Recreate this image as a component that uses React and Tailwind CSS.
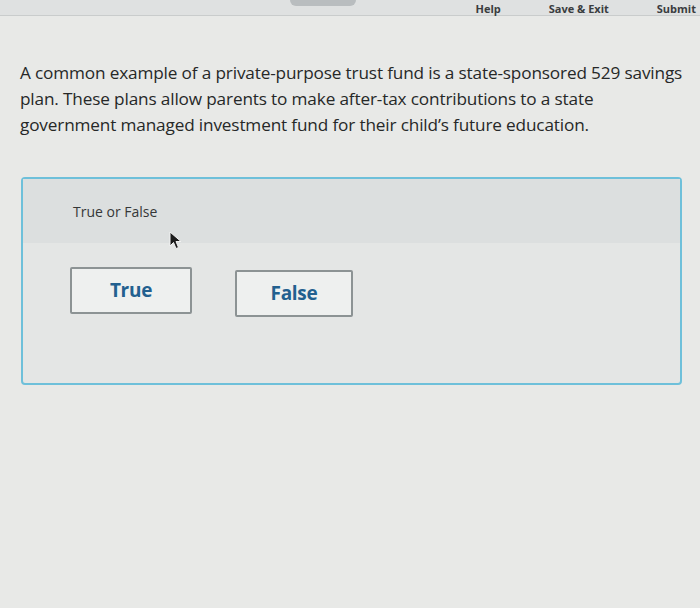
import React from "react";

const ChoiceButton = ({ label, className = "" }) => (
  <button
    className={
      "h-[47px] border-2 border-[#8c9394] rounded-[2px] bg-[#eef0ef] text-[#22608f] text-[19px] font-bold tracking-[-0.3px] " +
      className
    }
  >
    {label}
  </button>
);

const Cursor = () => (
  <svg width="14" height="20" viewBox="0 0 14 20" className="absolute left-[146px] top-[52px]">
    <path d="M1 1 L1 15 L4.5 11.5 L7 17.5 L9.5 16.5 L7 10.5 L12 10.5 Z" fill="#1c1c1c" stroke="#f2f2f2" strokeWidth="1" />
  </svg>
);

export default function App() {
  return (
    <div
      className="w-[700px] h-[608px] overflow-hidden bg-[#e8e9e7] text-[#262828]"
      style={{ fontFamily: "'Open Sans', Lato, sans-serif" }}
    >
      {/* top toolbar */}
      <div className="h-[16px] bg-[#dfe1e1] border-b border-[#c9cccc] flex items-end relative">
        <div className="ml-[290px] w-[66px] h-[6px] rounded-b-[6px] bg-[#b9bdbf] self-start" />
        <div className="ml-auto mr-[4px] flex gap-[48px] items-end pb-[1px] text-[11px] font-bold text-[#3a3d40] leading-none">
          <span>Help</span>
          <span>Save &amp; Exit</span>
          <span>Submit</span>
        </div>
      </div>

      <p className="mt-[44px] ml-[20px] text-[17.2px] leading-[26px] font-medium tracking-[-0.15px]">
        A common example of a private-purpose trust fund is a state-sponsored 529 savings
        <br />
        plan. These plans allow parents to make after-tax contributions to a state
        <br />
        government managed investment fund for their child’s future education.
      </p>

      <div className="mt-[39px] ml-[21px] w-[661px] h-[208px] border-2 border-[#6ec0da] rounded-[4px] bg-[#e4e6e5] relative">
        <div className="h-[64px] bg-[#dcdfdf] pl-[50px] pt-[22px] text-[14px] text-[#353738]">True or False</div>
        <Cursor />
        <div className="flex items-start gap-[43px] pl-[47px] pt-[24px]">
          <ChoiceButton label="True" className="w-[122px]" />
          <ChoiceButton label="False" className="w-[118px] mt-[3px]" />
        </div>
      </div>
    </div>
  );
}
